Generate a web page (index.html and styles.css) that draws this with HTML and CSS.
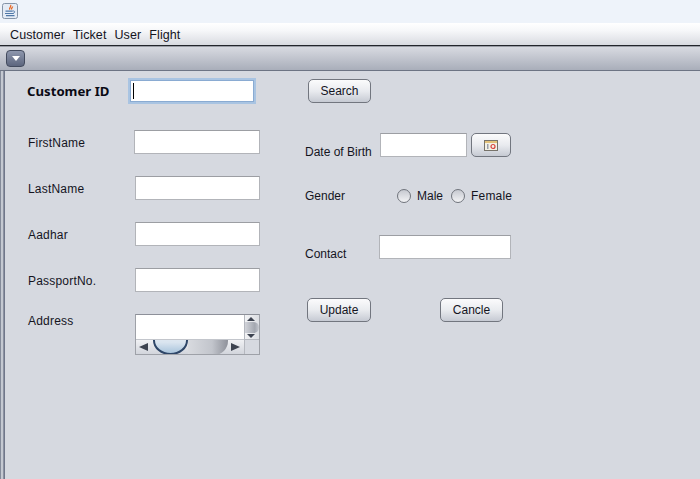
FILE: index.html
```html
<!DOCTYPE html>
<html lang="en">
<head>
<meta charset="utf-8">
<title>Customer</title>
<link rel="stylesheet" href="styles.css">
</head>
<body>
<div class="titlebar">
  <svg class="app-icon" width="16" height="16" viewBox="0 0 16 16">
    <rect x="0.5" y="0.5" width="15" height="15" rx="2" fill="#e4ebf5" stroke="#8494a8"/>
    <path d="M8.5 2c1.6 1.6-2 2.6-.6 4.6M10.5 3.5c.4 1-1.6 1.6-.8 3" fill="none" stroke="#e8641e" stroke-width="1.3"/>
    <path d="M3.5 7.5h7v1.3h-7zM3 10h8.5v1H3zM4 12h8.5v1.2H4z" fill="#4f78a8"/>
    <path d="M10.5 8c2.5-.5 3 1.5 .5 2.5" fill="none" stroke="#4f78a8"/>
  </svg>
</div>
<nav class="menubar">
  <span>Customer</span><span>Ticket</span><span>User</span><span>Flight</span>
</nav>
<div class="frame">
  <div class="frame-head">
    <button class="frame-menu" aria-label="Frame menu"><span class="frame-arrow"></span></button>
  </div>
  <main class="form">
    <div class="top-row">
      <label class="id-label">Customer ID</label>
      <div class="field id-field"><span class="caret"></span></div>
      <button class="btn search">Search</button>
    </div>
    <div class="columns">
      <section class="left">
        <div class="row"><label>FirstName</label><div class="field f1"></div></div>
        <div class="row"><label>LastName</label><div class="field"></div></div>
        <div class="row"><label>Aadhar</label><div class="field"></div></div>
        <div class="row"><label>PassportNo.</label><div class="field"></div></div>
        <div class="row address">
          <label>Address</label>
          <div class="scrollpane">
            <div class="text-area"></div>
            <div class="vbar">
              <span class="vthumb"></span>
              <span class="arrow up"></span>
              <span class="arrow down"></span>
            </div>
            <div class="hbar">
              <span class="arrow left-a"></span>
              <span class="hthumb"></span>
              <span class="htrail"></span>
              <span class="arrow right-a"></span>
            </div>
            <div class="corner"></div>
          </div>
        </div>
      </section>
      <section class="right">
        <div class="rrow dob">
          <label>Date of Birth</label>
          <div class="field date"></div>
          <button class="btn cal" aria-label="Pick date">
            <svg width="14" height="11" viewBox="0 0 14 11">
              <rect x="0.5" y="0.5" width="13" height="10" fill="#f3f1e6" stroke="#77736a"/>
              <rect x="1" y="1" width="12" height="2" fill="#e3c27a"/>
              <rect x="3" y="4" width="1.5" height="5" fill="#9aa0aa"/>
              <circle cx="9" cy="6.5" r="2" fill="none" stroke="#d8423c" stroke-width="1.2"/>
            </svg>
          </button>
        </div>
        <div class="rrow gender">
          <label>Gender</label>
          <span class="radio"></span><span class="opt">Male</span>
          <span class="radio"></span><span class="opt wide">Female</span>
        </div>
        <div class="rrow contact">
          <label>Contact</label>
          <div class="field phone"></div>
        </div>
        <div class="actions">
          <button class="btn update">Update</button>
          <button class="btn cancel">Cancle</button>
        </div>
      </section>
    </div>
  </main>
</div>
</body>
</html>
```
FILE: styles.css
```css
* { box-sizing: border-box; }
html, body { margin: 0; height: 479px; overflow: hidden; }
body {
  width: 700px;
  font: 12px "Liberation Sans", Arial, sans-serif;
  color: #14141e;
  background: #d6d9e0;
  display: flex;
  flex-direction: column;
}
label { display: block; }
.titlebar {
  height: 23px;
  flex: none;
  background: #eef3fa;
  padding: 3px 0 0 2px;
}
.app-icon { display: block; }
.menubar {
  height: 22px;
  flex: none;
  background: linear-gradient(#ffffff 0, #f6f7f9 35%, #d9dbe1 100%);
  display: flex;
  gap: 8px;
  align-items: center;
  padding: 1px 0 0 10px;
  font-size: 12.5px;
  letter-spacing: 0.1px;
}
.frame {
  flex: 1;
  display: flex;
  flex-direction: column;
  border-top: 1px solid #23262c;
}
.frame-head {
  height: 25px;
  flex: none;
  padding: 3px 0 0 6px;
  background: linear-gradient(#d8dae1, #a9aeba);
  border-top: 1px solid #9a9da6;
  border-bottom: 1px solid #6d7484;
}
.frame-menu {
  display: flex;
  align-items: center;
  justify-content: center;
  width: 19px;
  height: 17px;
  padding: 0;
  border: 1px solid #434b5e;
  border-radius: 4px;
  background: linear-gradient(#8e97ad, #5d667e);
}
.frame-arrow {
  width: 0;
  height: 0;
  border: 4px solid transparent;
  border-top: 5px solid #fff;
  border-bottom: 0;
}
.form {
  flex: 1;
  padding: 8px 0 0 27px;
  background: linear-gradient(90deg, #5e6678 0, #aab0bc 1px, #e0e3e8 2px, #70778a 4px, #70778a 5px, #d6d9e0 5px);
}
.field {
  width: 125px;
  height: 24px;
  flex: none;
  background: #fff;
  border: 1px solid #b2b4b9;
  border-top-color: #9c9ea3;
}
.top-row {
  display: flex;
  align-items: center;
  height: 24px;
}
.id-label {
  width: 101px;
  font: bold 13.2px "Noto Sans", sans-serif;
  color: #0a0a14;
}
.id-field {
  width: 128px;
  height: 26px;
  padding: 3px 0 0 3px;
  border: 2px solid #a9c4e2;
  box-shadow: inset 0 0 0 1px #8aabd2;
}
.caret { display: block; width: 1px; height: 16px; background: #000; }
.btn {
  font: 12px "Liberation Sans", Arial, sans-serif;
  color: #14141e;
  height: 24px;
  padding: 0;
  border: 1px solid #72767f;
  border-radius: 5px;
  background: linear-gradient(#fbfbfc 0, #e9ebef 50%, #c6cad3 100%);
  display: flex;
  align-items: center;
  justify-content: center;
}
.search { width: 63px; margin-left: 52px; }
.columns { display: flex; margin-top: 27px; align-items: flex-start; }
.left { width: 232px; margin-left: 1px; display: flex; flex-direction: column; gap: 22px; }
.row { display: flex; justify-content: space-between; align-items: center; height: 24px; }
.row label { padding-top: 2px; letter-spacing: 0.2px; }
.f1 { width: 126px; }
.address { align-items: flex-start; height: 41px; }
.address label { padding-top: 0; }
.scrollpane {
  width: 125px;
  height: 41px;
  display: grid;
  grid-template-columns: 108px 1fr;
  grid-template-rows: 24px 1fr;
  border: 1px solid #9ea1a8;
  border-top-color: #8d9099;
}
.text-area { background: #fff; }
.vbar {
  position: relative;
  background: linear-gradient(90deg, #f2f3f5, #dcdee3);
  border-left: 1px solid #b5b8bf;
}
.vthumb {
  position: absolute;
  left: 0;
  top: 7px;
  width: 14px;
  height: 11px;
  border-radius: 0 6px 6px 0;
  background: linear-gradient(90deg, #d2d4da, #a3a7b0 70%, #c4c7cf);
}
.hbar {
  display: flex;
  align-items: center;
  background: linear-gradient(#f0f1f4, #d2d5dc);
  overflow: hidden;
  border-top: 1px solid #c3c6cc;
}
.corner { background: #d6d9e0; border-left: 1px solid #b5b8bf; border-top: 1px solid #b5b8bf; }
.arrow { display: block; width: 0; height: 0; border: 4px solid transparent; flex: none; }
.up, .down { position: absolute; left: 2px; border-width: 3.5px 4.5px; }
.up { top: 2px; border-top: 0; border-bottom: 4px solid #3d4350; }
.down { bottom: 1px; border-bottom: 0; border-top: 4px solid #3d4350; }
.left-a { border-left: 0; border-right: 9px solid #3d4350; margin-left: 3px; }
.right-a { border-right: 0; border-left: 9px solid #3d4350; margin-left: 3px; }
.hthumb {
  width: 35px;
  height: 30px;
  margin: -14px 0 0 5px;
  flex: none;
  border: 2px solid #2e4668;
  border-radius: 0 0 18px 18px / 0 0 15px 15px;
  background: linear-gradient(#f0f3f7 0, #d9e4ef 60%, #a9c4dc 100%);
}
.htrail {
  width: 40px;
  height: 16px;
  margin-top: -1px;
  flex: none;
  background: linear-gradient(90deg, #d8dadf, #c2c5cc 60%, #8e919a);
  border-radius: 0 0 14px 0;
}
.right { margin-left: 45px; padding-top: 3px; }
.rrow { display: flex; height: 24px; }
.rrow label { padding-top: 11px; }
.dob label { width: 75px; padding-top: 12px; }
.date { width: 87px; }
.cal { width: 40px; margin-left: 4px; }
.gender { margin-top: 27px; align-items: center; }
.gender label { padding-top: 0; width: 92px; }
.radio {
  width: 14px;
  height: 14px;
  border: 1px solid #70747c;
  border-radius: 50%;
  background: linear-gradient(#c6c9d0, #f2f3f5);
  flex: none;
}
.opt { margin-left: 6px; margin-right: 8px; }
.wide { letter-spacing: 0.2px; }
.contact { margin-top: 27px; }
.contact label { width: 74px; padding-top: 12px; }
.phone { width: 132px; }
.actions { display: flex; margin-top: 39px; margin-left: 2px; }
.update { width: 64px; }
.cancel { width: 63px; margin-left: 69px; }
```
